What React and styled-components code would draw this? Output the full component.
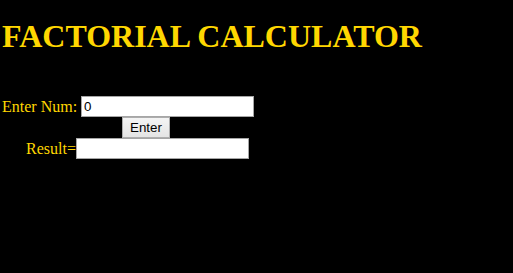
import React, {useState} from 'react';
import styled, {createGlobalStyle} from 'styled-components';

const GlobalStyle = createGlobalStyle`
  html, body {
    margin: 0;
    padding: 0;
    background-color: #000;
  }
  body {
    font-family: "Liberation Serif", "Times New Roman", serif;
    color: #ffd700;
  }
`

const factorial = (n) => {
  let r = 1;
  for(let i = 2; i <= n; i++){
    r *= i;
  }
  return r;
}

const App = () => {
  const [num, setNum] = useState('0');
  const [result, setResult] = useState('');

  const calculate = () => {
    const n = parseInt(num, 10);
    if(isNaN(n) || n < 0){
      setResult('');
    } else {
      setResult(String(factorial(n)));
    }
  }

  return (
    <Page>
      <GlobalStyle />
      <Title>FACTORIAL CALCULATOR</Title>
      <Form>
        <Row indent={2}>
          <Label>Enter Num:&nbsp;</Label>
          <TextBox value={num} onChange={e => setNum(e.target.value)} />
        </Row>
        <Row indent={122}>
          <Button onClick={calculate}>Enter</Button>
        </Row>
        <Row indent={26}>
          <Label>Result=</Label>
          <TextBox value={result} readOnly />
        </Row>
      </Form>
    </Page>
  )
}

export default App;

const Page = styled.main`
  box-sizing: border-box;
  width: 100%;
  height: 273px;
  padding-top: 18px;
  overflow: hidden;
  background-color: #000;
`

const Title = styled.h1`
  margin: 0 0 0 2px;
  font-size: 32px;
  line-height: 36px;
  font-weight: bold;
  color: #ffd700;
`

const Form = styled.section`
  margin-top: 42px;

  display: flex;
  flex-direction: column;
`

const Row = styled.div`
  height: 21px;
  padding-left: ${p => p.indent}px;

  display: flex;
  align-items: center;
`

const Label = styled.span`
  font-size: 16px;
  white-space: pre;
`

const TextBox = styled.input`
  box-sizing: border-box;
  width: 173px;
  height: 21px;
  margin: 0;
  padding: 1px 2px;

  border: 1px solid #a6a6a6;
  background: #fff;

  font-family: "Liberation Sans", Arial, sans-serif;
  font-size: 13.33px;
  color: #000;
  outline: none;
`

const Button = styled.button`
  box-sizing: border-box;
  width: 48px;
  height: 21px;
  margin: 0;
  padding: 1px 6px;

  border: 1px solid #adadad;
  border-radius: 0;
  background: linear-gradient(#f4f4f4, #e4e4e4);

  font-family: "Liberation Sans", Arial, sans-serif;
  font-size: 13.33px;
  color: #000;
`
